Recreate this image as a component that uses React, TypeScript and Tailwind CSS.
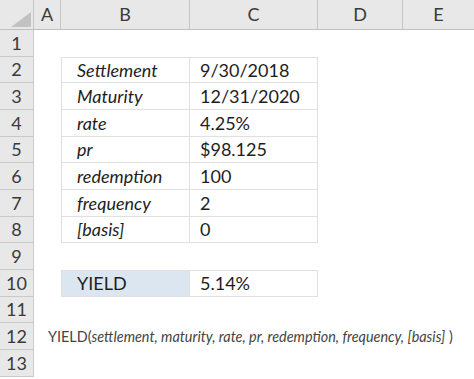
import React from "react";

const cols = ["A", "B", "C", "D", "E"];
const colW = ["w-[27px]", "w-[129px]", "w-[128px]", "w-[85px]", "w-[71px]"];

const table: Record<number, [string, string]> = {
  2: ["Settlement", "9/30/2018"],
  3: ["Maturity", "12/31/2020"],
  4: ["rate", "4.25%"],
  5: ["pr", "$98.125"],
  6: ["redemption", "100"],
  7: ["frequency", "2"],
  8: ["[basis]", "0"],
};

const rowH = ["h-[27px]", "h-[26px]", "h-[27px]"];

export default function App() {
  const rows = Array.from({ length: 13 }, (_, i) => i + 1);
  return (
    <div
      className="w-[474px] h-[379px] bg-white overflow-hidden text-[#1e1e1e]"
      style={{ fontFamily: "Lato, 'Open Sans', sans-serif" }}
    >
      {/* header row */}
      <div className="flex h-[30px] bg-[#e8e8e8] border-b border-[#bfbfbf]">
        <div className="relative w-[34px] h-full border-r border-[#c6c6c6]">
          <svg className="absolute left-[11px] top-[12px]" width="20" height="15" viewBox="0 0 20 15">
            <polygon points="20,0 20,15 0,15" fill="#c2c2c2" />
          </svg>
        </div>
        {cols.map((c, i) => (
          <div
            key={c}
            className={`${colW[i]} h-full flex items-center justify-center text-[18px] text-[#3a3a3a] ${i < 4 ? "border-r border-[#c6c6c6]" : ""}`}
          >
            {c}
          </div>
        ))}
      </div>
      {rows.map((r, idx) => {
        const h = rowH[idx % 3];
        const t = table[r];
        const isYield = r === 10;
        const inTable = !!t || isYield;
        const topBorder = r === 2 || r === 10;
        return (
          <div key={r} className={`flex ${h}`}>
            <div className="w-[34px] h-full bg-[#e8e8e8] border-r border-b border-[#c9c9c9] flex items-center justify-center text-[18px] text-[#3a3a3a]">
              {r}
            </div>
            <div className={`${colW[0]} h-full relative`}>
              {r === 12 && (
                <div className="absolute left-[14px] top-0 h-full flex items-center whitespace-nowrap text-[14.4px] text-[#444]">
                  YIELD(<span className="italic">settlement, maturity, rate, pr, redemption, frequency, [basis]</span>&nbsp;)
                </div>
              )}
            </div>
            {inTable ? (
              <>
                <div
                  className={`${colW[1]} h-full flex items-center pl-[15px] text-[18px] border-l border-r border-b border-[#e0e0e0] ${topBorder ? "border-t" : ""} ${isYield ? "bg-[#dce6f1]" : ""}`}
                >
                  {isYield ? <span>YIELD</span> : <span className="italic">{t[0]}</span>}
                </div>
                <div
                  className={`${colW[2]} h-full flex items-center pl-[10px] text-[18px] border-r border-b border-[#e0e0e0] ${topBorder ? "border-t" : ""}`}
                >
                  {isYield ? "5.14%" : t[1]}
                </div>
              </>
            ) : (
              <>
                <div className={`${colW[1]} h-full`} />
                <div className={`${colW[2]} h-full`} />
              </>
            )}
            <div className={`${colW[3]} h-full`} />
            <div className={`${colW[4]} h-full`} />
          </div>
        );
      })}
    </div>
  );
}
